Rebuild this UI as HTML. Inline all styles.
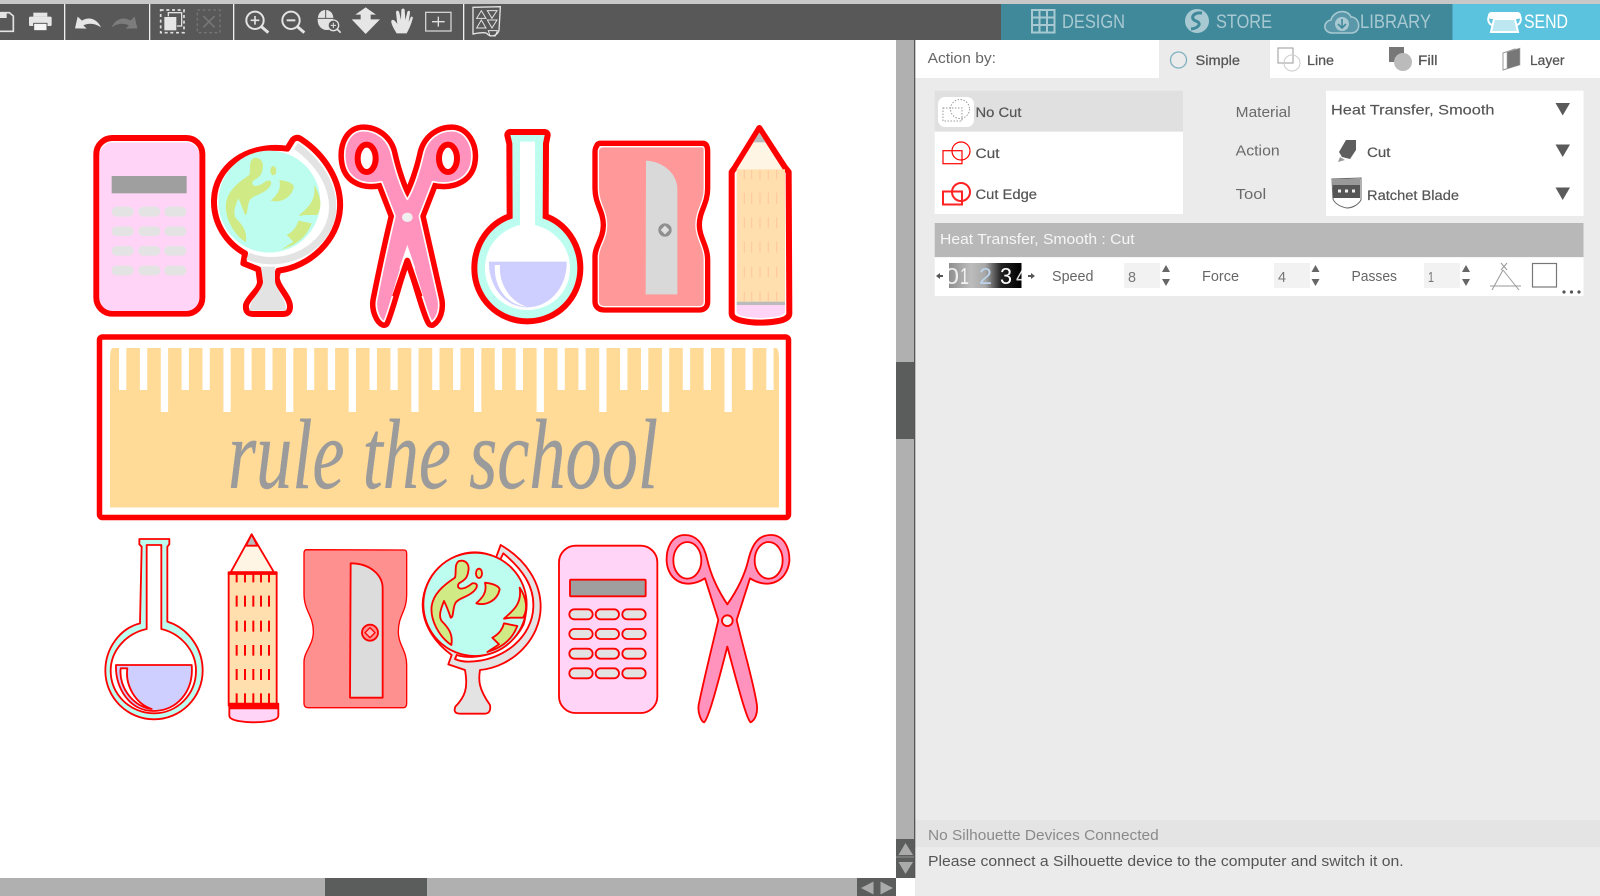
<!DOCTYPE html>
<html><head><meta charset="utf-8"><title>Silhouette Send</title>
<style>
html,body{margin:0;padding:0;background:#fff;width:1600px;height:896px;overflow:hidden}
svg{display:block}
text{font-family:"Liberation Sans","DejaVu Sans",sans-serif}
</style></head><body>
<svg width="1600" height="896" viewBox="0 0 1600 896" xmlns="http://www.w3.org/2000/svg">
<defs>
<g id="land">
<path d="M520 145C540 140 552 155 548 175C545 195 540 200 520 212C510 225 525 240 560 212C580 210 575 225 565 235C545 255 520 255 510 270C500 285 505 315 495 315C490 300 480 275 475 265C465 290 458 310 468 325C488 345 503 365 497 397C460 372 433 322 438 280C443 245 470 220 508 195C513 175 505 155 520 145Z"/>
<ellipse cx="580" cy="182" rx="9" ry="14"/>
<path d="M598 210C620 212 640 220 642 230C635 265 600 280 572 272C590 255 605 240 598 210Z"/>
<path d="M702 225C722 255 728 290 712 315L675 315L655 318C680 295 710 275 702 225Z"/>
<path d="M655 332L695 340C680 380 650 405 605 418L640 395L620 375C640 365 650 350 655 332Z"/>
</g>
<linearGradient id="sel" x1="0" x2="1" y1="0" y2="0">
<stop offset="0" stop-color="#8f8f8f"/><stop offset=".3" stop-color="#bcbcbc"/><stop offset=".5" stop-color="#a8a8a8"/><stop offset=".72" stop-color="#222"/><stop offset="1" stop-color="#000"/>
</linearGradient>
<clipPath id="selc"><rect x="949" y="263" width="72.5" height="25"/></clipPath>
</defs>

<!-- base areas -->
<rect width="1600" height="896" fill="#fff"/>
<rect x="915" y="40" width="685" height="856" fill="#ebebeb"/>
<rect x="0" y="0" width="1600" height="4" fill="#c8c8c8"/>
<rect x="0" y="4" width="1600" height="36" fill="#585858"/>
<g fill="#f0f0f0"><rect x="64" y="4" width="1.3" height="36"/><rect x="149" y="4" width="1.3" height="36"/><rect x="233" y="4" width="1.3" height="36"/><rect x="463" y="4" width="1.3" height="36"/></g>

<!-- toolbar icons -->
<g transform="scale(.33333)">
<g fill="none" stroke="#e3e3e3" stroke-width="5"><path d="M-6 38H28L40 48V94H-6"/></g>
<rect x="-6" y="38" width="26" height="16" fill="#e3e3e3"/>
<g fill="#e6e6e6"><rect x="100" y="38" width="42" height="12"/><rect x="87" y="50" width="68" height="28" rx="4"/></g>
<rect x="101" y="70" width="40" height="22" fill="#f5f5f5" stroke="#585858" stroke-width="3"/>
<path d="M225 85L233 50L246 62C268 48 292 58 303 82C285 70 268 68 250 76L260 86Z" fill="#e6e6e6"/>
<path d="M412 85L404 50L391 62C369 48 345 58 335 82C352 70 369 68 387 76L377 86Z" fill="#7c7c7c"/>
<rect x="482" y="30" width="70" height="68" fill="none" stroke="#e0e0e0" stroke-width="5" stroke-dasharray="9 8"/>
<rect x="505" y="38" width="40" height="40" fill="none" stroke="#e0e0e0" stroke-width="4"/>
<rect x="492" y="50" width="38" height="42" fill="#e6e6e6" stroke="#585858" stroke-width="2"/>
<rect x="592" y="30" width="68" height="68" fill="none" stroke="#767676" stroke-width="4" stroke-dasharray="8 8"/>
<path d="M610 48L644 82M644 48L610 82" stroke="#767676" stroke-width="5"/>
<g fill="none" stroke="#e3e3e3" stroke-width="6">
<circle cx="765" cy="61" r="26"/><path d="M784 80L805 98" stroke-width="9"/><path d="M752 61H778M765 48V74" stroke-width="5"/>
<circle cx="873" cy="61" r="26"/><path d="M892 80L913 98" stroke-width="9"/><path d="M860 61H886" stroke-width="6"/>
</g>
<path d="M977 30C960 30 953 45 953 60C953 78 965 90 980 90C985 90 990 88 990 88L1000 55C1000 42 992 30 977 30Z" fill="#e3e3e3"/>
<path d="M977 30V55M953 55H1000" stroke="#585858" stroke-width="3"/>
<circle cx="1000" cy="76" r="16" fill="#585858" stroke="#e3e3e3" stroke-width="4"/>
<path d="M1011 87L1022 98" stroke="#e3e3e3" stroke-width="5"/><path d="M992 76H1008M1000 68V84" stroke="#e3e3e3" stroke-width="3"/>
<path d="M1097 22L1128 44H1112V58H1140L1097 102L1055 58H1082V44H1066Z" fill="#e6e6e6"/>
<path d="M1190 100C1180 85 1172 68 1174 62C1178 56 1186 62 1192 72L1188 38C1188 30 1196 30 1198 38L1203 60L1204 30C1206 24 1213 24 1214 30L1216 60L1222 36C1225 30 1231 32 1230 38L1226 66L1232 52C1236 48 1240 50 1238 56C1234 72 1228 86 1220 100Z" fill="#e6e6e6"/>
<rect x="1277" y="37" width="76" height="56" fill="none" stroke="#d0d0d0" stroke-width="4"/>
<path d="M1296 65H1334M1315 50V80" stroke="#e0e0e0" stroke-width="4"/>
<path d="M1419 22L1501 20L1497 92C1490 110 1470 112 1460 100C1450 95 1430 100 1419 102Z" fill="none" stroke="#e3e3e3" stroke-width="4"/>
<g fill="none" stroke="#e3e3e3" stroke-width="3"><path d="M1444 32L1458 55H1430ZM1476 55L1462 32H1491ZM1444 60L1458 84H1430ZM1476 84L1462 60H1491ZM1465 92H1492L1486 108H1470Z"/></g>
</g>

<!-- nav tabs -->
<rect x="1001" y="4" width="451.5" height="36" fill="#40899b"/>
<rect x="1452.5" y="4" width="147.5" height="36" fill="#5bc3dd"/>
<g fill="none" stroke="#a8c9d2" stroke-width="2"><rect x="1032" y="10" width="22.5" height="22.5"/><path d="M1032 17.5H1054.5M1032 25H1054.5M1039.5 10V32.5M1047 10V32.5"/></g>
<circle cx="1197" cy="21" r="12" fill="#a8c9d2"/>
<path d="M1202 13C1192 12 1190 19 1196 21C1202 23 1199 28 1191 29" fill="none" stroke="#40899b" stroke-width="3"/>
<path d="M1333 33C1322 33 1323 21 1331 20C1333 11 1347 8 1351 17C1360 17 1362 32 1352 33Z" fill="#a8c9d2" fill-opacity=".25" stroke="#a8c9d2" stroke-width="1.6"/>
<circle cx="1342" cy="24" r="7" fill="#a8c9d2"/><path d="M1342 19V27M1338 24L1342 28L1346 24" stroke="#40899b" stroke-width="1.6" fill="none"/>
<g fill="none" stroke="#fff" stroke-width="2"><rect x="1489" y="13" width="31" height="5" rx="2.5" fill="#fff"/><path d="M1494 19L1491 32H1518L1515 19Z" fill="#fff" fill-opacity=".6"/><path d="M1489 16C1487 20 1489 24 1492 25M1520 16C1522 20 1520 24 1517 25"/></g>
<g font-size="19.5">
<text x="1062" y="28" textLength="63" lengthAdjust="spacingAndGlyphs" fill="#a8c9d2">DESIGN</text>
<text x="1216" y="28" textLength="56" lengthAdjust="spacingAndGlyphs" fill="#a8c9d2">STORE</text>
<text x="1360" y="28" textLength="71" lengthAdjust="spacingAndGlyphs" fill="#a8c9d2">LIBRARY</text>
<text x="1524" y="28" textLength="44" lengthAdjust="spacingAndGlyphs" fill="#fff">SEND</text>
</g>

<!-- action by row -->
<rect x="915" y="40" width="685" height="38" fill="#fff"/>
<rect x="1159" y="40" width="111" height="38" fill="#ebebeb"/>
<text x="927.6" y="63" font-size="14.5" textLength="68.4" lengthAdjust="spacingAndGlyphs" fill="#666">Action by:</text>
<ellipse cx="1178.5" cy="60" rx="8" ry="8" fill="none" stroke="#7fb0c0" stroke-width="1.3"/>
<g font-size="13.5" fill="#555" stroke="#555" stroke-width=".25">
<text x="1195.5" y="65" textLength="44.5" lengthAdjust="spacingAndGlyphs">Simple</text>
<text x="1307" y="65" textLength="27" lengthAdjust="spacingAndGlyphs">Line</text>
<text x="1418" y="65" textLength="19.5" lengthAdjust="spacingAndGlyphs">Fill</text>
<text x="1530" y="65" textLength="34.5" lengthAdjust="spacingAndGlyphs">Layer</text>
</g>
<rect x="1278" y="48" width="15" height="15" fill="none" stroke="#999" stroke-width="1"/>
<circle cx="1292" cy="63" r="8" fill="none" stroke="#ccc" stroke-width="1"/>
<rect x="1389" y="47" width="15" height="15" fill="#777"/>
<circle cx="1403" cy="62" r="9" fill="#bbb"/>
<path d="M1503 53L1515 49V66L1503 70Z" fill="none" stroke="#999" stroke-width="1"/>
<path d="M1507 52L1520 48V65L1507 69Z" fill="#777" stroke="#aaa" stroke-width=".6"/>

<!-- left list -->
<rect x="934.7" y="90.7" width="248.3" height="41" fill="#e0e0e0"/>
<rect x="934.7" y="131.7" width="248.3" height="82.3" fill="#fff"/>
<rect x="938" y="97" width="36" height="30" rx="7" fill="#fff"/>
<circle cx="960" cy="109" r="9.5" fill="#fff" stroke="#999" stroke-width="1" stroke-dasharray="1.5 1.5"/>
<rect x="943" y="108" width="19" height="13" fill="none" stroke="#999" stroke-width="1" stroke-dasharray="1.5 1.5"/>
<rect x="943" y="150.7" width="19" height="13" fill="none" stroke="#f00" stroke-width="1.2"/>
<circle cx="961" cy="151" r="9" fill="none" stroke="#f00" stroke-width="1.2"/>
<rect x="943" y="191.5" width="19" height="13" fill="none" stroke="#f22" stroke-width="2"/>
<circle cx="961" cy="192" r="9" fill="none" stroke="#f22" stroke-width="2"/>
<g font-size="13.5" fill="#555" stroke="#555" stroke-width=".2">
<text x="975.5" y="117" textLength="46" lengthAdjust="spacingAndGlyphs">No Cut</text>
<text x="975.5" y="158" textLength="24" lengthAdjust="spacingAndGlyphs">Cut</text>
<text x="975.5" y="199" textLength="61.5" lengthAdjust="spacingAndGlyphs">Cut Edge</text>
</g>

<!-- right dropdowns -->
<g font-size="15" fill="#6a6a6a">
<text x="1235.7" y="117" textLength="55" lengthAdjust="spacingAndGlyphs">Material</text>
<text x="1235.7" y="155.5" textLength="44" lengthAdjust="spacingAndGlyphs">Action</text>
<text x="1235.7" y="199" textLength="30.5" lengthAdjust="spacingAndGlyphs">Tool</text>
</g>
<rect x="1326" y="90.7" width="257.5" height="125.3" fill="#fff"/>
<text x="1331" y="114.5" font-size="14" textLength="163.5" lengthAdjust="spacingAndGlyphs" fill="#555" stroke="#555" stroke-width=".15">Heat Transfer, Smooth</text>
<text x="1367" y="157" font-size="13.5" textLength="23.5" lengthAdjust="spacingAndGlyphs" fill="#555" stroke="#555" stroke-width=".2">Cut</text>
<text x="1367" y="200" font-size="13.5" textLength="92" lengthAdjust="spacingAndGlyphs" fill="#555" stroke="#555" stroke-width=".2">Ratchet Blade</text>
<g fill="#5a5a5a">
<path d="M1555.5 103H1570L1562.7 115.5Z"/><path d="M1555.5 144.5H1570L1562.7 157Z"/><path d="M1555.5 187.5H1570L1562.7 200Z"/>
</g>
<path d="M1346 140H1356L1356 150L1350 159L1342 157L1339 152Z" fill="#5e5e5e"/>
<path d="M1340 157L1338 162L1345 160" fill="#999"/>
<path d="M1332 179L1361 178V200C1358 205 1352 208 1347 208C1341 207 1335 204 1333 199Z" fill="#fff" stroke="#666" stroke-width="1"/>
<rect x="1333" y="179" width="27" height="6" fill="#999"/>
<rect x="1333" y="185" width="27" height="13" fill="#555"/>
<path d="M1338 191h3M1345 191h3M1352 191h3" stroke="#eee" stroke-width="3"/>

<!-- settings bar -->
<rect x="934.7" y="223" width="648.8" height="34" fill="#b8b8b8"/>
<text x="940" y="244" font-size="14.5" textLength="194.6" lengthAdjust="spacingAndGlyphs" fill="#f6f6f6">Heat Transfer, Smooth : Cut</text>
<rect x="934.7" y="257.5" width="648.8" height="38.5" fill="#fff"/>
<path d="M936 276L940 273V275H943V277H940V279Z" fill="#555"/>
<path d="M1035 276L1031 273V275H1028V277H1031V279Z" fill="#555"/>
<rect x="949" y="263" width="72.5" height="25" fill="url(#sel)"/>
<g clip-path="url(#selc)" font-size="23" fill="#fff">
<text x="945" y="284" textLength="14" lengthAdjust="spacingAndGlyphs" fill="#eee">0</text>
<text x="960" y="284" textLength="9" lengthAdjust="spacingAndGlyphs" fill="#f4f4f4">1</text>
<text x="979" y="284" textLength="13" lengthAdjust="spacingAndGlyphs" fill="#bcd3ea">2</text>
<text x="1000" y="284" textLength="12" lengthAdjust="spacingAndGlyphs">3</text>
<text x="1016" y="284" textLength="11" lengthAdjust="spacingAndGlyphs" fill="#ddd">4</text>
</g>
<g font-size="15" fill="#666">
<text x="1052" y="281" textLength="41.5" lengthAdjust="spacingAndGlyphs">Speed</text>
<text x="1202" y="281" textLength="37" lengthAdjust="spacingAndGlyphs">Force</text>
<text x="1351.5" y="281" textLength="45.5" lengthAdjust="spacingAndGlyphs">Passes</text>
</g>
<g fill="#f2f2f2"><rect x="1124" y="263" width="36" height="25"/><rect x="1274" y="263" width="36" height="25"/><rect x="1424" y="263" width="36" height="25"/></g>
<g font-size="15" fill="#777">
<text x="1128" y="282" textLength="8" lengthAdjust="spacingAndGlyphs">8</text>
<text x="1278" y="282" textLength="8" lengthAdjust="spacingAndGlyphs">4</text>
<text x="1428" y="282" textLength="6" lengthAdjust="spacingAndGlyphs">1</text>
</g>
<g fill="#666">
<path d="M1166 265L1170 272H1162Z"/><path d="M1166 286L1170 279H1162Z"/>
<path d="M1315.5 265L1319.5 272H1311.5Z"/><path d="M1315.5 286L1319.5 279H1311.5Z"/>
<path d="M1466 265L1470 272H1462Z"/><path d="M1466 286L1470 279H1462Z"/>
</g>
<path d="M1503 270L1492 290M1503 270L1519 290M1490 286H1521M1501 263L1507 270M1507 263L1501 270" fill="none" stroke="#999" stroke-width="1"/>
<rect x="1532.5" y="263.5" width="24" height="23.5" fill="none" stroke="#777" stroke-width="1.2"/>
<g fill="#555"><circle cx="1564" cy="292" r="1.6"/><circle cx="1571.5" cy="292" r="1.6"/><circle cx="1579" cy="292" r="1.6"/></g>

<!-- status -->
<rect x="915" y="820" width="685" height="27" fill="#e4e4e4"/>
<text x="928" y="840" font-size="14.5" textLength="230.7" lengthAdjust="spacingAndGlyphs" fill="#8a8a8a">No Silhouette Devices Connected</text>
<text x="928" y="866" font-size="14.5" textLength="475.6" lengthAdjust="spacingAndGlyphs" fill="#555">Please connect a Silhouette device to the computer and switch it on.</text>

<!-- scrollbars -->
<rect x="896" y="40" width="18" height="799" fill="#b0b0b0"/>
<rect x="896" y="362" width="18" height="77" fill="#5a5d5b"/>
<rect x="896" y="839" width="18" height="39" fill="#5a5d5b"/>
<rect x="896" y="856" width="18" height="2" fill="#777"/>
<rect x="914" y="40" width="1.3" height="838" fill="#555"/>
<path d="M905.5 843L913 855H898.5Z" fill="#aaa"/><path d="M905.5 874L913 862H898.5Z" fill="#aaa"/>
<rect x="0" y="878" width="857" height="18" fill="#b0b0b0"/>
<rect x="325" y="878" width="102" height="18" fill="#5a5d5b"/>
<rect x="857" y="878" width="39" height="18" fill="#5a5d5b"/>
<path d="M861 888L873.5 881.5V894.5Z" fill="#aaa"/><path d="M893 888L880.5 881.5V894.5Z" fill="#aaa"/>

<!-- TOP ROW: calculator, globe, scissors -->
<g transform="translate(80 110) scale(.33333)" stroke-linejoin="round">
<rect x="49" y="84" width="318" height="527" rx="48" fill="#fff" stroke="#f00" stroke-width="18"/>
<rect x="58" y="97" width="300" height="506" rx="40" fill="#ffd4f6"/>
<rect x="95" y="198" width="225" height="52" fill="#9f9f9f"/>
<g fill="#e3e3e3">
<rect x="95" y="290" width="66" height="30" rx="15"/><rect x="175" y="290" width="66" height="30" rx="15"/><rect x="253" y="290" width="66" height="30" rx="15"/>
<rect x="95" y="349" width="66" height="29" rx="14"/><rect x="175" y="349" width="66" height="29" rx="14"/><rect x="253" y="349" width="66" height="29" rx="14"/>
<rect x="95" y="408" width="66" height="29" rx="14"/><rect x="175" y="408" width="66" height="29" rx="14"/><rect x="253" y="408" width="66" height="29" rx="14"/>
<rect x="95" y="467" width="66" height="29" rx="14"/><rect x="175" y="467" width="66" height="29" rx="14"/><rect x="253" y="467" width="66" height="29" rx="14"/>
</g>
<path d="M622 116L638 90Q650 78 664 88C735 135 785 215 780 295C775 390 690 470 595 482L590 500C590 530 630 560 630 590Q630 612 610 612L520 612Q495 612 498 585C505 560 540 540 540 515L535 478L490 460L495 430C440 400 400 340 402 270C405 170 500 100 622 116Z" fill="#fff" stroke="#f00" stroke-width="18"/>
<path d="M648 108C715 155 760 225 758 295C755 385 670 452 575 452C545 452 520 445 503 438" fill="none" stroke="#e3e3e3" stroke-width="22"/>
<path d="M542 470L585 470L585 510C585 540 620 565 618 602L508 602C510 565 550 540 550 510Z" fill="#e3e3e3"/>
<circle cx="568" cy="275" r="153" fill="#bdfdf0"/>
<use href="#land" fill="#d0ea85"/>
<path d="M982 268C965 240 945 180 935 135C925 85 885 62 850 62C810 62 790 105 795 150C800 200 840 230 905 215L945 318C925 400 900 520 890 570C885 600 900 630 912 635C925 610 950 510 982 415C1014 510 1040 610 1055 635C1070 625 1080 600 1075 570L1018 318L1058 215C1125 230 1170 200 1175 150C1180 105 1155 62 1115 62C1080 62 1040 85 1030 135C1020 180 1000 240 982 268Z" fill="#ff93bd" stroke="#f00" stroke-width="38" paint-order="stroke"/>
<path d="M982 268C965 240 945 180 935 135C925 85 885 62 850 62C810 62 790 105 795 150C800 200 840 230 905 215L945 318C925 400 900 520 890 570C885 600 900 630 912 635C925 610 950 510 982 415C1014 510 1040 610 1055 635C1070 625 1080 600 1075 570L1018 318L1058 215C1125 230 1170 200 1175 150C1180 105 1155 62 1115 62C1080 62 1040 85 1030 135C1020 180 1000 240 982 268Z" fill="#ff93bd" stroke="#fff" stroke-width="5"/>
<ellipse cx="860" cy="145" rx="27" ry="41" fill="#fff" stroke="#f00" stroke-width="18"/>
<ellipse cx="1104" cy="145" rx="27" ry="41" fill="#fff" stroke="#f00" stroke-width="18"/>
<ellipse cx="982" cy="322" rx="16" ry="14" fill="#f0f0f0"/>
<path d="M982 405L1006 475H958Z" fill="#fff"/>
<path d="M945 560L982 452L1019 560" fill="none" stroke="#f00" stroke-width="18"/>
</g>

<!-- TOP ROW: flask, sharpener, pencil -->
<g transform="translate(460 110) scale(.33333)" stroke-linejoin="round">
<path d="M151 75L254 75L249 100L248 325C310 345 352 405 352 475C352 560 285 625 202 625C120 625 52 560 52 475C52 405 95 345 158 325L157 100Z" fill="#bdfdf0" stroke="#f00" stroke-width="36" paint-order="stroke"/>
<path d="M180 95L225 95L225 345C285 360 330 410 330 475C330 545 275 600 202 600C130 600 75 545 75 475C75 410 120 360 180 345Z" fill="#fff"/>
<path d="M87 455L320 455C322 530 270 592 202 592C135 592 85 530 87 455Z" fill="#cfcfff"/>
<path d="M105 465L120 465C115 520 150 575 200 590C140 585 100 530 105 465Z" fill="#fff"/>
<path d="M420 110L728 110Q733 110 733 125L733 235C733 280 708 300 708 345C708 385 733 410 733 450L733 575Q733 590 718 590L435 590Q415 590 415 575L415 440C415 410 440 390 440 345C440 300 415 280 415 235L415 125Q415 110 430 110Z" fill="#ff9999" stroke="#f00" stroke-width="36" paint-order="stroke"/>
<path d="M420 110L728 110Q733 110 733 125L733 235C733 280 708 300 708 345C708 385 733 410 733 450L733 575Q733 590 718 590L435 590Q415 590 415 575L415 440C415 410 440 390 440 345C440 300 415 280 415 235L415 125Q415 110 430 110Z" fill="#ff9999" stroke="#fff" stroke-width="4"/>
<path d="M558 152C610 155 650 190 652 235L652 553L557 553Z" fill="#d9d9d9"/>
<circle cx="615" cy="360" r="20" fill="#8f8f8f"/><path d="M615 347L628 360L615 373L602 360Z" fill="#e0e0e0"/>
<path d="M898 54L975 172L986 186L988 610Q988 625 960 632Q900 644 845 632Q815 625 815 610L815 186L825 172Z" fill="#fff" stroke="#f00" stroke-width="18"/>
<path d="M898 68L968 178L830 178Z" fill="#fff5e5"/>
<path d="M898 68L917 97L880 97Z" fill="#bbb"/>
<rect x="830" y="178" width="145" height="397" fill="#ffdfae"/>
<rect x="830" y="575" width="145" height="10" fill="#bbb"/>
<path d="M830 585H975V605Q975 615 950 620Q900 628 855 620Q830 615 830 605Z" fill="#ffd4f6"/>
<g stroke="#ffc9a0" stroke-width="3.5" fill="none"><path d="M853 180V208M875 180V208M900 180V208M925 180V208M950 180V208M853 248V282M875 248V282M900 248V282M925 248V282M950 248V282M853 322V355M875 322V355M900 322V355M925 322V355M950 322V355M853 395V428M875 395V428M900 395V428M925 395V428M950 395V428M853 470V503M875 470V503M900 470V503M925 470V503M950 470V503M853 545V575M875 545V575M900 545V575M925 545V575M950 545V575"/></g>
</g>

<!-- RULER -->
<rect x="99.5" y="337" width="689" height="180.5" rx="3" fill="#fff" stroke="#f00" stroke-width="5.5"/>
<path d="M113 348H776Q779 348 779 360V507.5H110V360Q110 348 113 348Z" fill="#ffdb97"/>
<g fill="#fff">
<rect x="119" y="348" width="7.3" height="42"/><rect x="139.9" y="348" width="7.3" height="42"/><rect x="160.8" y="348" width="7.3" height="64"/><rect x="181.6" y="348" width="7.3" height="42"/><rect x="202.5" y="348" width="7.3" height="42"/><rect x="223.4" y="348" width="7.3" height="64"/><rect x="244.3" y="348" width="7.3" height="42"/><rect x="265.2" y="348" width="7.3" height="42"/><rect x="286" y="348" width="7.3" height="64"/><rect x="306.9" y="348" width="7.3" height="42"/><rect x="327.8" y="348" width="7.3" height="42"/><rect x="348.7" y="348" width="7.3" height="64"/><rect x="369.6" y="348" width="7.3" height="42"/><rect x="390.4" y="348" width="7.3" height="42"/><rect x="411.3" y="348" width="7.3" height="64"/><rect x="432.2" y="348" width="7.3" height="42"/><rect x="453.1" y="348" width="7.3" height="42"/><rect x="474" y="348" width="7.3" height="64"/><rect x="494.8" y="348" width="7.3" height="42"/><rect x="515.7" y="348" width="7.3" height="42"/><rect x="536.6" y="348" width="7.3" height="64"/><rect x="557.5" y="348" width="7.3" height="42"/><rect x="578.4" y="348" width="7.3" height="42"/><rect x="599.2" y="348" width="7.3" height="64"/><rect x="620.1" y="348" width="7.3" height="42"/><rect x="641" y="348" width="7.3" height="42"/><rect x="661.9" y="348" width="7.3" height="64"/><rect x="682.8" y="348" width="7.3" height="42"/><rect x="703.6" y="348" width="7.3" height="42"/><rect x="724.5" y="348" width="7.3" height="64"/><rect x="745.4" y="348" width="7.3" height="42"/><rect x="766.3" y="348" width="7.3" height="42"/>
</g>
<text x="228" y="488" textLength="430" lengthAdjust="spacingAndGlyphs" font-size="100" fill="#9b9b9b" stroke="#9b9b9b" stroke-width=".4" style="font-family:'Liberation Serif',serif;font-style:italic">rule the school</text>

<!-- BOTTOM ROW left -->
<g transform="translate(90 525) scale(.33333)" stroke="#f00" stroke-width="5.5" stroke-linejoin="round">
<path d="M148 42L238 42L238 58L232 65L232 290C295 310 338 370 338 437C338 518 272 583 192 583C112 583 46 518 46 437C46 370 90 310 150 295L155 65L148 58Z" fill="#bdfdf0"/>
<path d="M170 60L214 60L214 312C270 325 318 375 318 437C318 510 260 565 192 565C122 565 62 510 62 437C62 375 110 325 170 312Z" fill="#fff"/>
<path d="M78 420L305 420C312 500 260 558 190 558C120 558 75 490 78 420Z" fill="#cfcfff"/>
<path d="M92 430L112 430C105 480 135 535 185 552C135 548 85 490 92 430Z" fill="#fff"/>
<path d="M485 28L552 142L422 142Z" fill="#fff5e5"/>
<path d="M485 28L502 62L468 62Z" fill="#bbb"/>
<rect x="416" y="142" width="144" height="400" fill="#ffdfae"/>
<path d="M418 550H565V572Q565 583 540 588Q490 596 445 588Q418 583 418 572Z" fill="#ffd4f6"/>
<rect x="418" y="536" width="147" height="13" fill="#f00"/>
<rect x="416" y="142" width="144" height="5" fill="#f00"/>
<path d="M440 142V172M465 142V172M490 142V172M513 142V172M537 142V172M440 212V245M465 212V245M490 212V245M513 212V245M537 212V245M440 287V320M465 287V320M490 287V320M513 287V320M537 287V320M440 360V392M465 360V392M490 360V392M513 360V392M537 360V392M440 432V465M465 432V465M490 432V465M513 432V465M537 432V465M440 505V535M465 505V535M490 505V535M513 505V535M537 505V535" fill="none" stroke-width="6"/>
<path d="M650 74L942 75Q950 75 950 85L950 210C950 260 925 270 925 320C925 360 950 375 950 420L950 535Q950 548 940 548L655 548Q642 548 642 535L642 410C642 380 670 360 670 320C670 270 642 260 642 205L642 85Q642 74 650 74Z" fill="#ff9090" stroke-width="4"/>
<path d="M782 115C840 115 878 150 878 190L878 518L780 518Z" fill="#dcdcdc"/>
<circle cx="840" cy="323" r="24" fill="#ff9090"/>
<path d="M840 308L855 323L840 338L825 323Z" fill="#ffbcbc" stroke-width="4"/>
</g>

<!-- BOTTOM ROW right -->
<g transform="translate(410 525) scale(.33333)" stroke="#f00" stroke-width="5.5" stroke-linejoin="round">
<path d="M258 98L272 60C350 105 392 175 392 245C392 340 310 425 210 435C205 465 205 490 240 540Q244 565 225 566L150 566Q128 566 136 545C165 515 175 490 165 435L115 418L125 390C70 350 38 295 38 238C40 150 115 82 195 82C220 82 240 88 258 98Z" fill="#e3e3e3"/>
<path d="M280 85C340 135 372 185 370 245C368 335 280 410 175 410C160 410 148 408 135 402L140 390C200 410 300 380 340 300C360 240 340 160 270 105Z" fill="#fff"/>
<circle cx="195" cy="238" r="155" fill="#bdfdf0"/>
<use href="#land" transform="translate(-373 -37)" fill="#d0ea85"/>
<rect x="447" y="62" width="295" height="502" rx="50" fill="#ffd4f6"/>
<rect x="480" y="164" width="227" height="50" rx="3" fill="#9f9f9f"/>
<g fill="#e3e3e3">
<rect x="478" y="253" width="70" height="30" rx="15"/><rect x="557" y="253" width="70" height="30" rx="15"/><rect x="637" y="253" width="70" height="30" rx="15"/>
<rect x="478" y="312" width="70" height="30" rx="15"/><rect x="557" y="312" width="70" height="30" rx="15"/><rect x="637" y="312" width="70" height="30" rx="15"/>
<rect x="478" y="371" width="70" height="30" rx="15"/><rect x="557" y="371" width="70" height="30" rx="15"/><rect x="637" y="371" width="70" height="30" rx="15"/>
<rect x="478" y="430" width="70" height="30" rx="15"/><rect x="557" y="430" width="70" height="30" rx="15"/><rect x="637" y="430" width="70" height="30" rx="15"/>
</g>
<path d="M952 238C930 205 905 160 892 105C880 50 855 30 825 30C785 30 768 70 770 110C775 170 830 195 885 160L925 285C905 370 880 470 866 540C862 565 875 590 882 592C895 585 925 470 952 365C980 470 1010 585 1022 592C1035 585 1045 565 1040 535C1030 470 1000 370 980 285L1020 160C1075 195 1130 170 1138 110C1140 70 1122 30 1083 30C1050 30 1028 50 1015 105C1002 160 975 205 952 238Z" fill="#ff93bd"/>
<ellipse cx="832" cy="106" rx="42" ry="55" fill="#fff"/>
<ellipse cx="1076" cy="106" rx="42" ry="55" fill="#fff"/>
<circle cx="952" cy="287" r="16" fill="#f4f4f4"/>
</g>
</svg>
</body></html>
